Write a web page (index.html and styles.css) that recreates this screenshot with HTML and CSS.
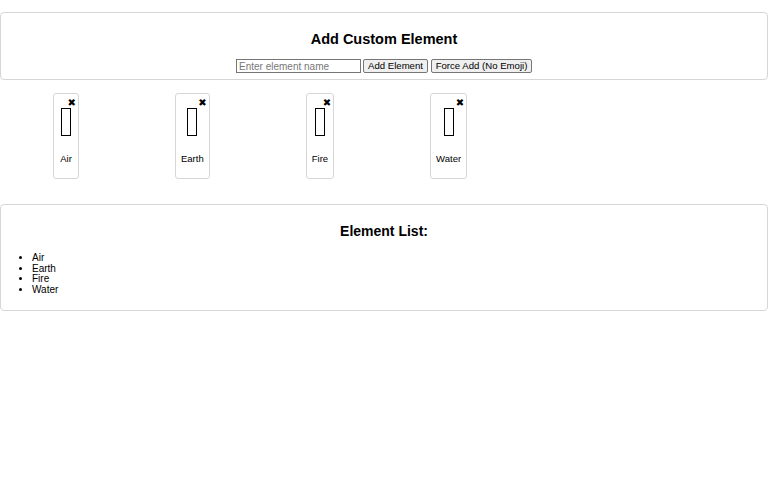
FILE: index.html
```html
<!DOCTYPE html>
<html lang="en">
<head>
    <meta charset="UTF-8">
    <meta name="viewport" content="width=device-width, initial-scale=1.0">
    <title>Elements</title>
    <link rel="stylesheet" href="styles.css">
</head>
<body>
    <section class="panel panel-add">
        <h2>Add Custom Element</h2>
        <div class="controls">
            <input type="text" class="name-input" placeholder="Enter element name">
            <button class="btn btn-add">Add Element</button>
            <button class="btn btn-force">Force Add (No Emoji)</button>
        </div>
    </section>

    <div class="cards">
        <div class="card">
            <span class="remove">&#x2716;</span>
            <span class="tofu"></span>
            <span class="label">Air</span>
        </div>
        <div class="card">
            <span class="remove">&#x2716;</span>
            <span class="tofu"></span>
            <span class="label">Earth</span>
        </div>
        <div class="card">
            <span class="remove">&#x2716;</span>
            <span class="tofu"></span>
            <span class="label">Fire</span>
        </div>
        <div class="card">
            <span class="remove">&#x2716;</span>
            <span class="tofu"></span>
            <span class="label">Water</span>
        </div>
    </div>

    <section class="panel panel-list">
        <h3>Element List:</h3>
        <ul class="element-list">
            <li>Air</li>
            <li>Earth</li>
            <li>Fire</li>
            <li>Water</li>
        </ul>
    </section>
</body>
</html>
```

FILE: styles.css
```css
body{
    margin: 0;
    font-family: "Liberation Sans", Arial, Helvetica, sans-serif;
    color: #000;
}

.panel{
    border: 1px solid #d6d6d6;
    border-radius: 4px;
    width: 768px;
    box-sizing: border-box;
}

.panel-add{
    margin-top: 12px;
    height: 68px;
    padding-top: 17px;
    text-align: center;
}
.panel-add h2{
    margin: 0 0 11px;
    font-size: 14.5px;
    line-height: 18px;
}

.controls{
    display: flex;
    justify-content: center;
}
.name-input{
    width: 125px;
    height: 14px;
    box-sizing: border-box;
    margin: 0 2px 0 0;
    padding: 0 2px;
    border: 1px solid #767676;
    font-family: inherit;
    font-size: 10px;
}
.name-input::placeholder{
    color: #777;
}
.btn{
    height: 14px;
    box-sizing: border-box;
    margin: 0;
    padding: 0;
    border: 1px solid #767676;
    border-radius: 2px;
    background-color: #efefef;
    font-family: inherit;
    font-size: 9.6px;
    line-height: 12px;
    white-space: nowrap;
}
.btn-add{
    width: 65px;
    margin-right: 3px;
}
.btn-force{
    width: 101px;
}

.cards{
    display: flex;
    gap: 96px;
    padding-left: 53px;
    margin-top: 13px;
}
.card{
    position: relative;
    height: 86px;
    min-width: 26px;
    box-sizing: border-box;
    padding: 14px 5px 0;
    border: 1px solid #d6d6d6;
    border-radius: 3px;
    display: flex;
    flex-direction: column;
    align-items: center;
}
.remove{
    position: absolute;
    top: 4px;
    right: 2px;
    font-family: "DejaVu Sans", sans-serif;
    font-size: 10px;
    line-height: 10px;
}
.tofu{
    width: 10px;
    height: 28px;
    box-sizing: border-box;
    border: 1.5px solid #000;
}
.label{
    margin-top: 17px;
    font-size: 9.5px;
    line-height: 12px;
}

.panel-list{
    margin-top: 25px;
    height: 107px;
    padding-top: 17px;
}
.panel-list h3{
    margin: 0 0 13px;
    text-align: center;
    font-size: 14px;
    line-height: 18px;
}
.element-list{
    margin: 0;
    padding-left: 31px;
    font-size: 10px;
    line-height: 10.7px;
}
```
